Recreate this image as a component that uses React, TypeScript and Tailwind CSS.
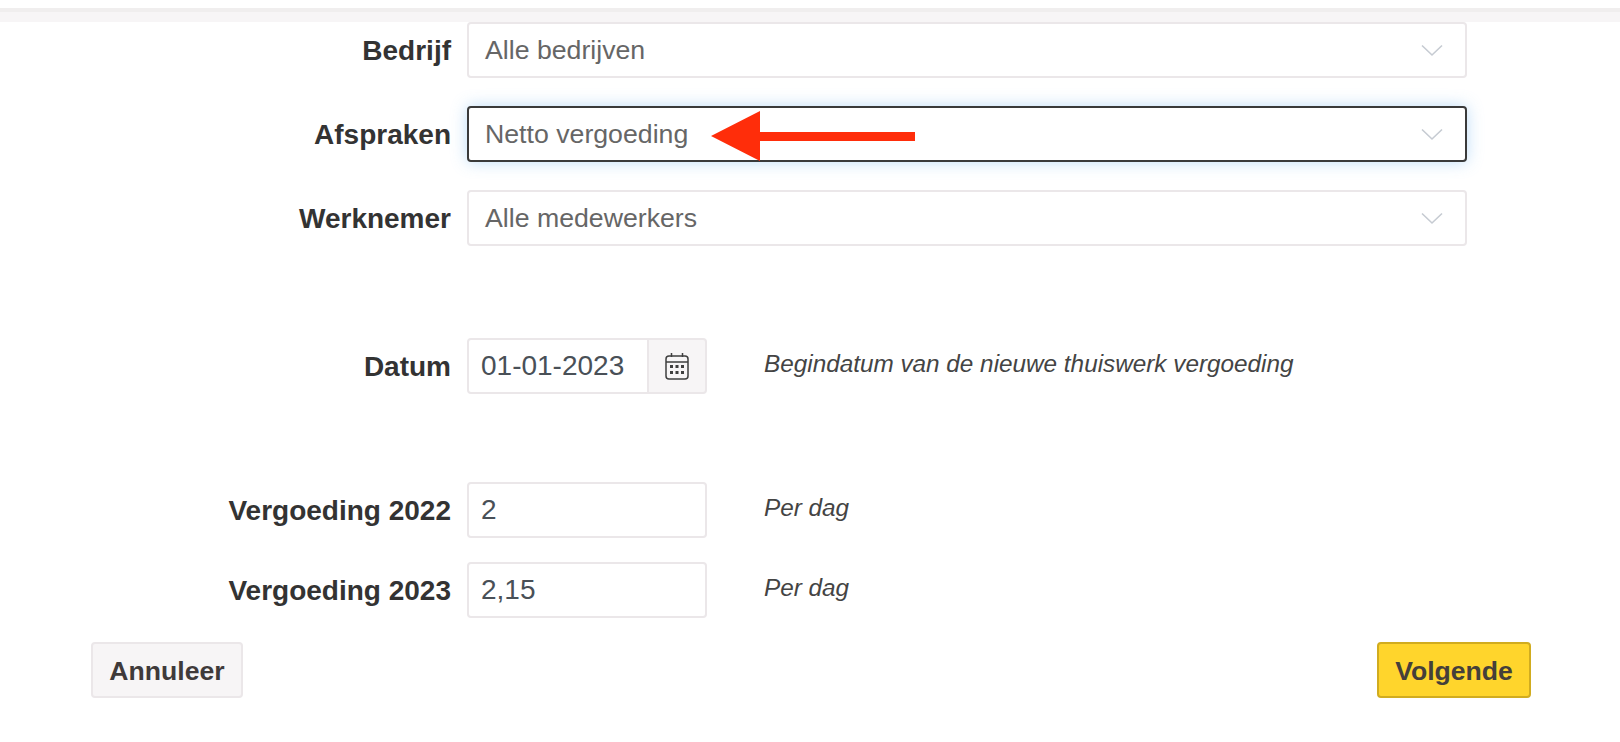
import React from "react";

const font = "font-['Liberation_Sans',Arial,sans-serif]";

function Label({ children }: { children: React.ReactNode }) {
  return (
    <label className="w-[451px] shrink-0 translate-y-[1px] text-right text-[28px] font-bold leading-none text-[#333333]">
      {children}
    </label>
  );
}

function Chevron() {
  return (
    <svg width="22" height="13" viewBox="0 0 22 13" fill="none" className="shrink-0">
      <path d="M1 1.5 L11 11 L21 1.5" stroke="#c6cbd2" strokeWidth="1.6" />
    </svg>
  );
}

function SelectBox({ value, focused }: { value: string; focused?: boolean }) {
  return (
    <div
      className={
        focused
          ? "ml-[16px] flex h-[56px] w-[1000px] items-center justify-between rounded-[4px] border-2 border-[#3a3a3a] bg-white pl-[16px] pr-[22px] text-[26.7px] text-[#666666] shadow-[0_0_16px_rgba(110,180,240,0.45)]"
          : "ml-[16px] flex h-[56px] w-[1000px] items-center justify-between rounded-[4px] border-2 border-[#ebe7e9] bg-white pl-[16px] pr-[22px] text-[26.7px] text-[#666666]"
      }
    >
      <span>{value}</span>
      <Chevron />
    </div>
  );
}

function Calendar() {
  return (
    <svg width="24" height="28" viewBox="0 0 24 28" fill="none">
      <rect x="1" y="4" width="22" height="23" rx="3" stroke="#3f3f3f" strokeWidth="1.5" />
      <path d="M1 10 H23" stroke="#3f3f3f" strokeWidth="1.5" />
      <path d="M6.5 1 V5 M17.5 1 V5" stroke="#3f3f3f" strokeWidth="1.5" />
      <g fill="#3f3f3f">
        <rect x="5" y="13" width="3" height="3" />
        <rect x="10.5" y="13" width="3" height="3" />
        <rect x="16" y="13" width="3" height="3" />
        <rect x="5" y="19" width="3" height="3" />
        <rect x="10.5" y="19" width="3" height="3" />
        <rect x="16" y="19" width="3" height="3" />
      </g>
    </svg>
  );
}

function Hint({ children }: { children: React.ReactNode }) {
  return <p className="ml-[57px] -translate-y-[2px] text-[24.3px] italic text-[#444444]">{children}</p>;
}

function MoneyInput({ value }: { value: string }) {
  return (
    <div className="ml-[16px] flex h-[56px] w-[240px] items-center rounded-[4px] border-2 border-[#ebe7e9] bg-white pl-[12px] text-[28px] text-[#495057]">
      {value}
    </div>
  );
}

export default function App() {
  return (
    <div className={`relative h-[742px] w-[1620px] overflow-hidden bg-white ${font}`}>
      <div className="h-[8px] bg-white" />
      <div className="h-[4px] bg-[#f0eeee]" />
      <div className="h-[10px] bg-[#f7f5f6]" />

      <div className="flex items-center">
        <Label>Bedrijf</Label>
        <SelectBox value="Alle bedrijven" />
      </div>
      <div className="relative mt-[28px] flex items-center">
        <Label>Afspraken</Label>
        <SelectBox value="Netto vergoeding" focused />
        <svg
          width="205"
          height="50"
          viewBox="0 0 205 50"
          className="absolute left-[711px] top-[5px]"
        >
          <path d="M0 25 L49 0 V21 H204 V30 H49 V50 Z" fill="#ff2d0a" />
        </svg>
      </div>
      <div className="mt-[28px] flex items-center">
        <Label>Werknemer</Label>
        <SelectBox value="Alle medewerkers" />
      </div>

      <div className="mt-[92px] flex items-center">
        <Label>Datum</Label>
        <div className="ml-[16px] flex h-[56px] w-[182px] items-center rounded-l-[4px] border-2 border-[#ebe7e9] bg-white pl-[12px] text-[28px] text-[#495057]">
          01-01-2023
        </div>
        <div className="flex h-[56px] w-[58px] items-center justify-center rounded-r-[4px] border-2 border-l-0 border-[#ebe7e9] bg-[#f7f5f6]">
          <Calendar />
        </div>
        <Hint>Begindatum van de nieuwe thuiswerk vergoeding</Hint>
      </div>

      <div className="mt-[88px] flex items-center">
        <Label>Vergoeding 2022</Label>
        <MoneyInput value="2" />
        <Hint>Per dag</Hint>
      </div>
      <div className="mt-[24px] flex items-center">
        <Label>Vergoeding 2023</Label>
        <MoneyInput value="2,15" />
        <Hint>Per dag</Hint>
      </div>

      <div className="mt-[24px] flex items-center justify-between pl-[91px] pr-[89px]">
        <button className="h-[56px] w-[152px] rounded-[4px] border-2 border-[#ebe7e9] bg-[#f7f5f6] pt-[3px] text-[26.6px] font-bold text-[#3f3a3a]">
          Annuleer
        </button>
        <button className="h-[56px] w-[154px] rounded-[4px] border-2 border-[#d1ac1f] bg-[#ffd52c] pt-[3px] text-[26.6px] font-bold text-[#453f3a]">
          Volgende
        </button>
      </div>
    </div>
  );
}
